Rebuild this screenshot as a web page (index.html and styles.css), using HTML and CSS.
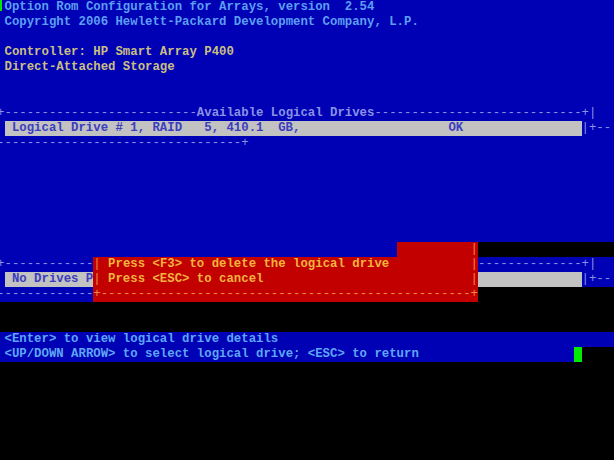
FILE: index.html
```html
<!DOCTYPE html>
<html lang="en">
    <head>
        <meta charset="utf-8">
        <title>Option ROM Configuration for Arrays</title>
        <link rel="stylesheet" href="styles.css">
    </head>
    <body>
        <div class="screen">
            <div class="row blue"><span class="cell"><i class="caret"></i></span><span class="hd">Option Rom Configuration for Arrays, version  2.54</span></div>
            <div class="row blue"><span class="cell"></span><span class="hd">Copyright 2006 Hewlett-Packard Development Company, L.P.</span></div>
            <div class="row blue"></div>
            <div class="row blue"><span class="cell"></span><span class="info">Controller: HP Smart Array P400</span></div>
            <div class="row blue"><span class="cell"></span><span class="info">Direct-Attached Storage</span></div>
            <div class="row blue"></div>
            <div class="row blue"></div>
            <div class="row blue"><span class="bd">+--------------------------<span class="title">Available Logical Drives</span>----------------------------+|</span></div>
            <div class="row blue">
                <span class="cell"></span>
                <span class="bar w78"><span class="lbl">Logical Drive # 1, RAID   5, 410.1  GB,</span>OK</span>
                <span class="bd">|+--</span>
            </div>
            <div class="row blue"><span class="bd">---------------------------------+</span></div>
            <div class="row blue"></div>
            <div class="row blue"></div>
            <div class="row blue"></div>
            <div class="row blue"></div>
            <div class="row blue"></div>
            <div class="row blue"></div>
            <div class="row">
                <span class="seg w54"></span>
                <span class="dialog w11"><span class="msg"></span><b class="edge">|</b></span>
            </div>
            <div class="row blue">
                <span class="bd">+------------</span>
                <span class="dialog w52"><b class="edge">|</b><span class="msg">Press &lt;F3&gt; to delete the logical drive</span><b class="edge">|</b></span>
                <span class="bd">--------------+|</span>
            </div>
            <div class="row blue">
                <span class="cell"></span>
                <span class="bar w12">No Drives P</span>
                <span class="dialog w52"><b class="edge">|</b><span class="msg">Press &lt;ESC&gt; to cancel</span><b class="edge">|</b></span>
                <span class="bar w14 flat"></span>
                <span class="bd">|+--</span>
            </div>
            <div class="row">
                <span class="seg bd">-------------</span>
                <span class="dialog w52"><b class="edge">+--------------------------------------------------+</b></span>
            </div>
            <div class="row"></div>
            <div class="row"></div>
            <div class="row blue"><span class="cell"></span><span class="help">&lt;Enter&gt; to view logical drive details</span></div>
            <div class="row">
                <span class="seg w78"><span class="cell"></span><span class="help">&lt;UP/DOWN ARROW&gt; to select logical drive; &lt;ESC&gt; to return</span></span>
                <span class="cursor"></span>
            </div>
            <div class="row"></div>
            <div class="row"></div>
            <div class="row"></div>
            <div class="row"></div>
            <div class="row"></div>
            <div class="row"></div>
        </div>
    </body>
</html>
```

FILE: styles.css
```css
body {
    margin: 0;
    background: #000;
    overflow: hidden;
}
.screen {
    width: 640px;
    margin-left: -2.9px;
    font: bold 12.333px/15.1px "Liberation Mono", "DejaVu Sans Mono", monospace;
}
.row {
    display: flex;
    height: 15.1px;
    white-space: pre;
}
.blue,
.seg {
    background: #0000b4;
}
.cell {
    width: 1ch;
    flex: none;
}
.caret {
    display: block;
    width: 4.9px;
    height: 11px;
    background: #00e400;
}
.hd {
    color: #5c9ff2;
}
.info {
    color: #c9bf84;
}
.help {
    color: #5ea6f6;
}
.bd {
    color: #8a92e6;
    font-weight: normal;
}
.title {
    font-weight: bold;
}
.bar {
    background: #c2c2c2;
    color: #3c3cbe;
    padding-left: 1ch;
    box-sizing: border-box;
    display: flex;
}
.bar.flat {
    padding-left: 0;
}
.lbl {
    width: 59ch;
}
.dialog {
    display: flex;
    background: #c20000;
    color: #f2b43e;
}
.dialog .msg {
    flex: 1;
    padding-left: 1ch;
}
.edge {
    color: #e98a42;
    font-weight: normal;
}
.w11 { width: 11ch; }
.w12 { width: 12ch; }
.w14 { width: 14ch; }
.w52 { width: 52ch; }
.w54 { width: 54ch; }
.w78 { width: 78ch; }
.seg.w78 {
    display: flex;
}
.cursor {
    width: 1ch;
    background: #00ec00;
}
```
